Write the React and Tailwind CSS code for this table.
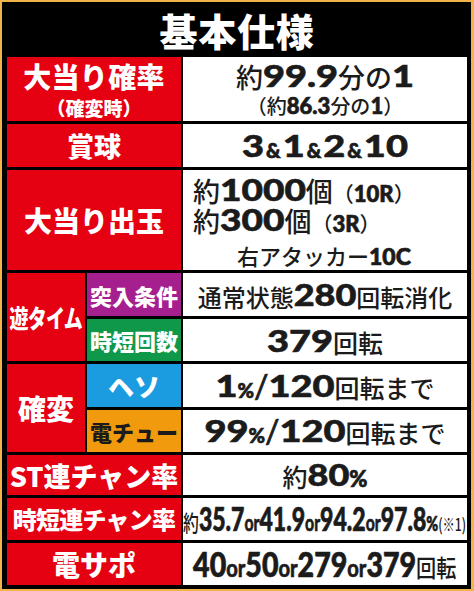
import React from 'react';

const jp = "font-['Noto_Sans_CJK_JP','Noto_Sans',sans-serif]";
const num = "font-['Lato','Noto_Sans_CJK_JP',sans-serif] font-black [-webkit-text-stroke:0.7px_#1b1b1b]";
// wide, squat digits like the reference
const big = `${num} leading-[24px] scale-y-[0.82] origin-[50%_88%]`;

function Label({ className = '', children }) {
  return (
    <div className={`flex items-center justify-center text-white font-black leading-none whitespace-nowrap ${className}`}>
      {children}
    </div>
  );
}

function Value({ className = '', children }) {
  return (
    <div className={`flex items-center justify-center bg-white text-[#1b1b1b] leading-none ${className}`}>
      {children}
    </div>
  );
}

export default function App() {
  return (
    <div className={`w-[474px] h-[591px] bg-[#f2b44a] pt-[2px] pl-[2px] pr-[3px] pb-[2px] ${jp}`}>
      <div className="h-full bg-black pl-[5px] pr-[4px] pb-[4px] flex flex-col">
        {/* Title */}
        <div className="h-[55px] flex items-center justify-center text-white text-[38px] font-black tracking-[0.02em] leading-none">
          基本仕様
        </div>

        <div className="grid grid-cols-[78px_94px_284px] grid-rows-[64px_43px_100px_43px_42px_43px_42px_40px_42px_42px] gap-x-[2px] gap-y-[3px]">
          {/* 大当り確率 */}
          <Label className="col-span-2 bg-[#e50012] flex-col gap-[8px]">
            <span className="text-[28px] tracking-[0.01em]">大当り確率</span>
            <span className="text-[19px]">（確変時）</span>
          </Label>
          <Value className="flex-col gap-[5px]">
            <span className="flex items-baseline">
              <span className="text-[27px] font-medium">約</span>
              <span className={`${big} text-[38px]`}>99.9</span>
              <span className="text-[27px] font-medium">分の</span>
              <span className={`${big} text-[38px]`}>1</span>
            </span>
            <span className="flex items-baseline text-[20px] font-medium">
              （約<span className={`${num} text-[22px]`}>86.3</span>分の<span className={`${num} text-[22px]`}>1</span>）
            </span>
          </Value>

          {/* 賞球 */}
          <Label className="col-span-2 bg-[#e50012] text-[27px]">賞球</Label>
          <Value>
            <span className="flex items-baseline">
              <span className={`${big} text-[38px]`}>3</span>
              <span className={`${num} text-[20px] mx-[2px]`}>&amp;</span>
              <span className={`${big} text-[38px]`}>1</span>
              <span className={`${num} text-[20px] mx-[2px]`}>&amp;</span>
              <span className={`${big} text-[38px]`}>2</span>
              <span className={`${num} text-[20px] mx-[2px]`}>&amp;</span>
              <span className={`${big} text-[38px]`}>10</span>
            </span>
          </Value>

          {/* 大当り出玉 */}
          <Label className="col-span-2 bg-[#e50012] text-[28px]">大当り出玉</Label>
          <Value className="flex-col !items-start !justify-start pl-[10px] pt-[6px]">
            <span className="flex items-baseline h-[30px]">
              <span className="text-[27px] font-medium">約</span>
              <span className={`${big} text-[37px]`}>1000</span>
              <span className="text-[27px] font-medium">個</span>
              <span className="text-[21px] font-medium">（<span className={`${num} text-[22px]`}>10R</span>）</span>
            </span>
            <span className="flex items-baseline h-[30px]">
              <span className="text-[27px] font-medium">約</span>
              <span className={`${big} text-[37px]`}>300</span>
              <span className="text-[27px] font-medium">個</span>
              <span className="text-[21px] font-medium">（<span className={`${num} text-[22px]`}>3R</span>）</span>
            </span>
            <span className="flex items-baseline h-[24px] pl-[44px] mt-[8px]">
              <span className="text-[22px] font-medium">右アタッカー</span>
              <span className={`${num} text-[23px]`}>10C</span>
            </span>
          </Value>

          {/* 遊タイム */}
          <Label className="row-span-2 bg-[#e50012]">
            <span className="text-[25px] tracking-[-0.04em] scale-x-[0.76]">遊タイム</span>
          </Label>
          <Label className="bg-[#a51f8e] text-[22px]">突入条件</Label>
          <Value>
            <span className="flex items-baseline">
              <span className="text-[24px] font-medium">通常状態</span>
              <span className={`${big} text-[36px]`}>280</span>
              <span className="text-[24px] font-medium">回転消化</span>
            </span>
          </Value>
          <Label className="bg-[#10984a] text-[22px]">時短回数</Label>
          <Value>
            <span className="flex items-baseline">
              <span className={`${big} text-[38px]`}>379</span>
              <span className="text-[25px] font-medium">回転</span>
            </span>
          </Value>

          {/* 確変 */}
          <Label className="row-span-2 bg-[#e50012] text-[28px]">確変</Label>
          <Label className="bg-[#1b9ce0] text-[26px]">ヘソ</Label>
          <Value>
            <span className="flex items-baseline">
              <span className={`${big} text-[38px]`}>1</span>
              <span className={`${num} text-[20px]`}>%</span>
              <span className={`${num} text-[32px] font-normal`}>/</span>
              <span className={`${big} text-[38px]`}>120</span>
              <span className="text-[25px] font-medium">回転まで</span>
            </span>
          </Value>
          <Label className="bg-[#f29a0e] !text-[#1b1b1b] text-[22px]">電チュー</Label>
          <Value>
            <span className="flex items-baseline">
              <span className={`${big} text-[38px]`}>99</span>
              <span className={`${num} text-[20px]`}>%</span>
              <span className={`${num} text-[32px] font-normal`}>/</span>
              <span className={`${big} text-[38px]`}>120</span>
              <span className="text-[25px] font-medium">回転まで</span>
            </span>
          </Value>

          {/* ST連チャン率 */}
          <Label className="col-span-2 bg-[#e50012] text-[27px]">ST連チャン率</Label>
          <Value>
            <span className="flex items-baseline">
              <span className="text-[25px] font-medium">約</span>
              <span className={`${big} text-[36px]`}>80</span>
              <span className={`${num} text-[22px]`}>%</span>
            </span>
          </Value>

          {/* 時短連チャン率 */}
          <Label className="col-span-2 bg-[#e50012] text-[24px] tracking-[-0.03em]">時短連チャン率</Label>
          <Value className="overflow-hidden">
            <span className="flex items-baseline scale-x-[0.72] whitespace-nowrap">
              <span className="text-[22px] font-medium">約</span>
              <span className={`${num} text-[32px]`}>35.7</span>
              <span className={`${num} text-[22px] font-bold`}>or</span>
              <span className={`${num} text-[32px]`}>41.9</span>
              <span className={`${num} text-[22px] font-bold`}>or</span>
              <span className={`${num} text-[32px]`}>94.2</span>
              <span className={`${num} text-[22px] font-bold`}>or</span>
              <span className={`${num} text-[32px]`}>97.8</span>
              <span className={`${num} text-[20px]`}>%</span>
              <span className="text-[17px] font-medium">(※1)</span>
            </span>
          </Value>

          {/* 電サポ */}
          <Label className="col-span-2 bg-[#e50012] text-[28px]">電サポ</Label>
          <Value className="overflow-hidden">
            <span className="flex items-baseline scale-x-[0.84] whitespace-nowrap">
              <span className={`${num} text-[34px]`}>40</span>
              <span className={`${num} text-[24px] font-bold`}>or</span>
              <span className={`${num} text-[34px]`}>50</span>
              <span className={`${num} text-[24px] font-bold`}>or</span>
              <span className={`${num} text-[34px]`}>279</span>
              <span className={`${num} text-[24px] font-bold`}>or</span>
              <span className={`${num} text-[34px]`}>379</span>
              <span className="text-[24px] font-medium">回転</span>
            </span>
          </Value>
        </div>
      </div>
    </div>
  );
}
